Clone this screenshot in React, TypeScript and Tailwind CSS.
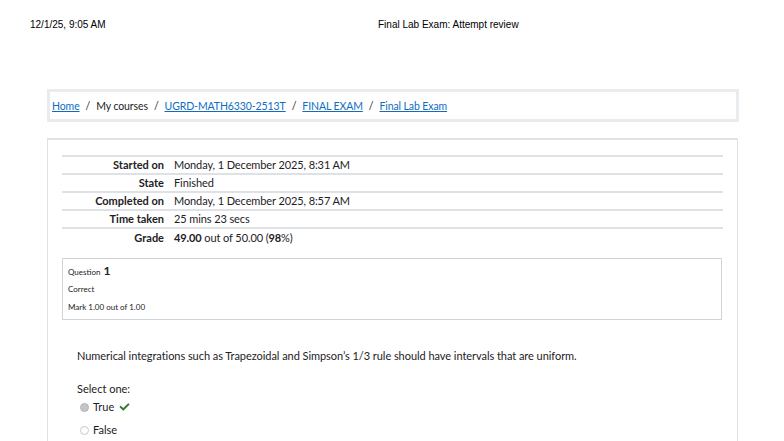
import React from 'react'

const summary: { label: string; value: React.ReactNode }[] = [
  { label: 'Started on', value: 'Monday, 1 December 2025, 8:31 AM' },
  { label: 'State', value: 'Finished' },
  { label: 'Completed on', value: 'Monday, 1 December 2025, 8:57 AM' },
  { label: 'Time taken', value: '25 mins 23 secs' },
  {
    label: 'Grade',
    value: (
      <>
        <b className="font-bold">49.00</b> out of 50.00 (<b className="font-bold">98</b>%)
      </>
    ),
  },
]

const crumbs = ['UGRD-MATH6330-2513T', 'FINAL EXAM', 'Final Lab Exam']

function Radio({ checked }: { checked: boolean }) {
  return (
    <span
      className={`inline-block w-[9px] h-[9px] rounded-full border ${
        checked ? 'bg-[#c4c4c4] border-[#b5b5b5]' : 'bg-white border-[#c8c8c8]'
      }`}
    />
  )
}

export default function App() {
  return (
    <div
      className="w-[784px] h-[441px] overflow-hidden bg-white text-[#1d2125]"
      style={{ fontFamily: 'Lato, "Noto Sans", sans-serif' }}
    >
      {/* print header */}
      <div
        className="flex items-center h-[18px] mt-[15px] text-[10px] text-black"
        style={{ fontFamily: '"Liberation Sans", Arial, sans-serif' }}
      >
        <span className="pl-[30px] w-[378px]">12/1/25, 9:05 AM</span>
        <span>Final Lab Exam: Attempt review</span>
      </div>

      {/* breadcrumb */}
      <nav className="ml-[47px] mt-[56px] w-[692px] h-[33px] border-[3px] border-[#e9ecef] flex items-center px-[2px] pt-[3px] text-[10.5px] gap-[6px] tracking-[-0.1px]">
        <a className="text-[#0f6cbf] underline">Home</a>
        <span>/</span>
        <span>My courses</span>
        {crumbs.map((c) => (
          <React.Fragment key={c}>
            <span>/</span>
            <a className="text-[#0f6cbf] underline">{c}</a>
          </React.Fragment>
        ))}
      </nav>

      {/* main region */}
      <div className="ml-[47px] mt-[16px] w-[691px] h-[320px] border border-t-2 border-[#dee2e6] px-[14px] pt-[15px]">
        <table className="w-[661px] text-[11px] border-collapse">
          <tbody>
            {summary.map((r) => (
              <tr key={r.label} className="border-t-2 border-[#dee2e6] h-[18px]">
                <th className="w-[102px] text-right font-bold pr-0 leading-[16px]">{r.label}</th>
                <td className="pl-[10px] leading-[16px] tracking-[-0.1px]">{r.value}</td>
              </tr>
            ))}
          </tbody>
        </table>

        {/* question info */}
        <div className="mt-[12px] w-[660px] h-[62px] border border-[#cfd4d9] px-[5px] pt-[5px] text-[8px]">
          <div className="flex items-baseline gap-[3px] h-[16px] leading-[14px]">
            <span>Question</span>
            <span className="text-[12px] font-bold">1</span>
          </div>
          <div className="h-[18px] leading-[18px]">Correct</div>
          <div className="h-[18px] leading-[18px]">Mark 1.00 out of 1.00</div>
        </div>

        {/* question content */}
        <div className="pl-[15px] text-[11px]">
          <p className="mt-[28px] leading-[16px] tracking-[-0.05px]">
            Numerical integrations such as Trapezoidal and Simpson’s 1/3 rule should have intervals that are uniform.
          </p>
          <p className="mt-[17px] leading-[16px]">Select one:</p>
          <div className="mt-[1px] flex items-center gap-[4px] pl-[3px] h-[18px]">
            <Radio checked />
            <span>True</span>
            <svg width="11" height="10" viewBox="0 0 512 512" className="ml-[1px]">
              <path
                fill="#357a32"
                d="M173.9 439.4l-166.4-166.4c-10-10-10-26.2 0-36.2l36.2-36.2c10-10 26.2-10 36.2 0L192 312.7 432.1 72.6c10-10 26.2-10 36.2 0l36.2 36.2c10 10 10 26.2 0 36.2l-294.4 294.4c-10 10-26.2 10-36.2 0z"
              />
            </svg>
          </div>
          <div className="mt-[5px] flex items-center gap-[4px] pl-[3px] h-[18px]">
            <Radio checked={false} />
            <span>False</span>
          </div>
        </div>
      </div>
    </div>
  )
}
